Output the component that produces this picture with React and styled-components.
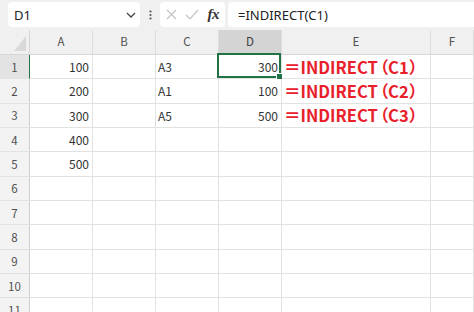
import React from 'react'
import styled, { createGlobalStyle } from 'styled-components'

const GlobalStyle = createGlobalStyle`
    html, body {
        margin: 0;
        background: #fff;
        overflow: hidden;
    }
    body {
        font-family: "Noto Sans CJK JP", "Noto Sans", sans-serif;
        color: #222;
    }
`

const Page = styled.div`
    width: 474px;
    height: 312px;
    overflow: hidden;
    background: #fff;
`

const FormulaBar = styled.div`
    display: flex;
    align-items: stretch;
    height: 30px;
    box-sizing: border-box;
    padding: 2px 0 3px 8px;
    background: #f0f0f0;
`

const Box = styled.div`
    display: flex;
    align-items: center;
    background: #fff;
    border-radius: 4px;
    box-sizing: border-box;
`

const NameBox = styled(Box)`
    width: 132px;
    justify-content: space-between;
    padding: 0 4px 0 6px;
    font-family: "Noto Sans", sans-serif;
    font-size: 13px;
    color: #222;
`

const Dots = styled.div`
    width: 20px;
    display: flex;
    align-items: center;
    justify-content: center;
`

const ActionBox = styled(Box)`
    width: 65px;
    justify-content: space-between;
    padding: 0 6px 0 6px;
`

const Fx = styled.span`
    font-family: "Liberation Serif", serif;
    font-style: italic;
    font-weight: bold;
    font-size: 15px;
    color: #333;
    letter-spacing: -0.5px;
`

const FormulaInput = styled(Box)`
    flex: 1;
    margin-left: 3px;
    border-radius: 4px 0 0 4px;
    padding-left: 10px;
    font-family: "Noto Sans", sans-serif;
    font-size: 13px;
    color: #222;
`

const Sheet = styled.div`
    display: grid;
    grid-template-columns: 30px 63px 63px 63px 63px 149px 1fr;
    grid-template-rows: 25px;
    grid-auto-rows: 24.33px;
`

const Corner = styled.div`
    position: relative;
    background: #f0f0f0;
    border-right: 1px solid #d6d6d6;
    border-bottom: 1px solid #d6d6d6;
    box-sizing: border-box;
`

const Triangle = styled.div`
    position: absolute;
    right: 3px;
    bottom: 3px;
    width: 0;
    height: 0;
    border-left: 12px solid transparent;
    border-bottom: 15px solid #d9d9d9;
`

const ColHead = styled.div`
    display: flex;
    align-items: center;
    justify-content: center;
    padding-bottom: 3px;
    box-sizing: border-box;
    font-size: 11.5px;
    color: ${p => (p.$active ? '#3b3b3b' : '#505050')};
    background: ${p => (p.$active ? '#d4d4d4' : '#f0f0f0')};
    border-right: 1px solid #dcdcdc;
    border-bottom: 1px solid #d6d6d6;
`

const RowHead = styled.div`
    display: flex;
    align-items: center;
    justify-content: center;
    box-sizing: border-box;
    font-size: 11.5px;
    color: #505050;
    background: ${p => (p.$active ? '#e3e3e3' : '#f3f3f3')};
    border-right: 1px solid ${p => (p.$active ? '#217346' : '#cfcfcf')};
    border-bottom: 1px solid #e2e2e2;
`

const Cell = styled.div`
    position: relative;
    display: flex;
    align-items: center;
    justify-content: ${p => (p.$num ? 'flex-end' : 'flex-start')};
    padding: 0 3px 0 2px;
    box-sizing: border-box;
    font-size: 12px;
    color: #333;
    white-space: nowrap;
    border-right: 1px solid #e2e2e2;
    border-bottom: 1px solid #e2e2e2;
`

const Formula = styled.span`
    font-family: "Noto Sans CJK JP", sans-serif;
    font-weight: bold;
    font-size: 16.5px;
    color: #e8202a;
`

const OpenParen = styled.span`
    font-feature-settings: "palt";
    padding-left: 2px;
`

const Selection = styled.div`
    position: absolute;
    top: -2px;
    left: -2px;
    right: 0;
    bottom: 0;
    border: 2px solid #217346;
    pointer-events: none;
`

const Handle = styled.div`
    position: absolute;
    right: -4px;
    bottom: -4px;
    width: 5px;
    height: 5px;
    background: #217346;
    border: 1px solid #fff;
`

const columns = ['A', 'B', 'C', 'D', 'E', 'F']

const rows = [
    { a: '100', c: 'A3', d: '300', e: 'C1' },
    { a: '200', c: 'A1', d: '100', e: 'C2' },
    { a: '300', c: 'A5', d: '500', e: 'C3' },
    { a: '400' },
    { a: '500' },
    {}, {}, {}, {}, {}, {},
]

const App = () => {
    return (
        <Page>
            <GlobalStyle />
            <FormulaBar>
                <NameBox>
                    <span>D1</span>
                    <svg width="10" height="6" viewBox="0 0 10 6">
                        <polyline points="1,1 5,5 9,1" fill="none" stroke="#444" strokeWidth="1.3" />
                    </svg>
                </NameBox>
                <Dots>
                    <svg width="3" height="10" viewBox="0 0 3 10">
                        <circle cx="1.5" cy="1.5" r="1.1" fill="#555" />
                        <circle cx="1.5" cy="5" r="1.1" fill="#555" />
                        <circle cx="1.5" cy="8.5" r="1.1" fill="#555" />
                    </svg>
                </Dots>
                <ActionBox>
                    <svg width="11" height="11" viewBox="0 0 11 11">
                        <path d="M1 1 L10 10 M10 1 L1 10" stroke="#c4c4c4" strokeWidth="1.2" />
                    </svg>
                    <svg width="14" height="11" viewBox="0 0 14 11">
                        <polyline points="1,6 5,10 13,1" fill="none" stroke="#c4c4c4" strokeWidth="1.2" />
                    </svg>
                    <Fx>fx</Fx>
                </ActionBox>
                <FormulaInput>=INDIRECT(C1)</FormulaInput>
            </FormulaBar>
            <Sheet>
                <Corner><Triangle /></Corner>
                {columns.map(c => (
                    <ColHead key={c} $active={c === 'D'}>{c}</ColHead>
                ))}
                {rows.map((r, i) => (
                    <React.Fragment key={i}>
                        <RowHead $active={i === 0}>{i + 1}</RowHead>
                        <Cell $num>{r.a}</Cell>
                        <Cell />
                        <Cell>{r.c}</Cell>
                        <Cell $num>
                            {r.d}
                            {i === 0 && (
                                <Selection><Handle /></Selection>
                            )}
                        </Cell>
                        <Cell>
                            {r.e && (
                                <Formula>＝INDIRECT<OpenParen>（</OpenParen>{r.e}）</Formula>
                            )}
                        </Cell>
                        <Cell />
                    </React.Fragment>
                ))}
            </Sheet>
        </Page>
    )
}

export default App
